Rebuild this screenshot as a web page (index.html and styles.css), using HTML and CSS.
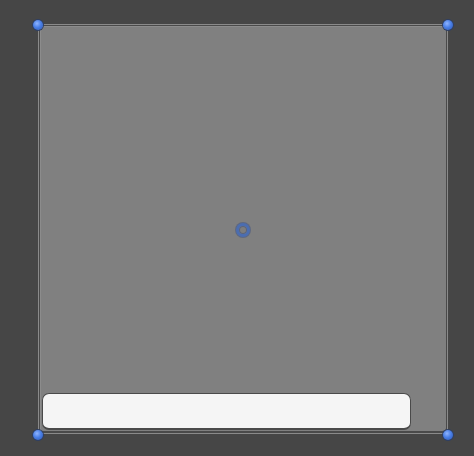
FILE: index.html
```html
<!DOCTYPE html>
<html>
<head>
<meta charset="utf-8">
<link rel="stylesheet" href="styles.css">
</head>
<body>
<div class="selection">
  <div class="panel">
    <div class="field"></div>
  </div>
  <span class="pivot"></span>
  <span class="handle tl"></span>
  <span class="handle tr"></span>
  <span class="handle bl"></span>
  <span class="handle br"></span>
</div>
</body>
</html>
```

FILE: styles.css
```css
html, body {
  margin: 0;
  padding: 0;
  background: #464646;
  width: 474px;
  height: 456px;
  overflow: hidden;
  font-family: "Liberation Sans", sans-serif;
}
.selection {
  position: relative;
  margin: 24px 0 0 38px;
  width: 408px;
  height: 408px;
  border: 1px solid #8a8a8a;
}
.panel {
  box-sizing: border-box;
  height: 100%;
  background: #808080;
  border: 1px solid #4a4a4a;
  border-bottom-width: 2px;
  border-radius: 0 0 5px 0;
  box-shadow: inset 1px 1px 0 #8c8c8c;
  display: flex;
  flex-direction: column;
  justify-content: flex-end;
  padding: 0 0 1px 2px;
}
.field {
  width: 367px;
  height: 34px;
  background: #f5f5f5;
  border: 1px solid #4a4a4a;
  border-bottom-width: 2px;
  border-radius: 7px;
}
.pivot {
  position: absolute;
  left: 197px;
  top: 198px;
  width: 8px;
  height: 8px;
  border: 3px solid #4b6db0;
  border-radius: 50%;
  background: #7d7d7d;
  box-shadow: 0 0 0 1px rgba(60,80,130,0.5), inset 0 0 0 1px rgba(40,60,110,0.4);
}
.handle {
  position: absolute;
  width: 10px;
  height: 10px;
  border-radius: 50%;
  background: radial-gradient(circle at 40% 35%, #8fb4ff 0%, #4a7fe6 45%, #2a56b8 100%);
  box-shadow: 0 0 0 1px #2d3f66;
}
.tl { left: -6px; top: -5px; }
.tr { right: -6px; top: -5px; }
.bl { left: -6px; bottom: -7px; }
.br { right: -6px; bottom: -7px; }
```
